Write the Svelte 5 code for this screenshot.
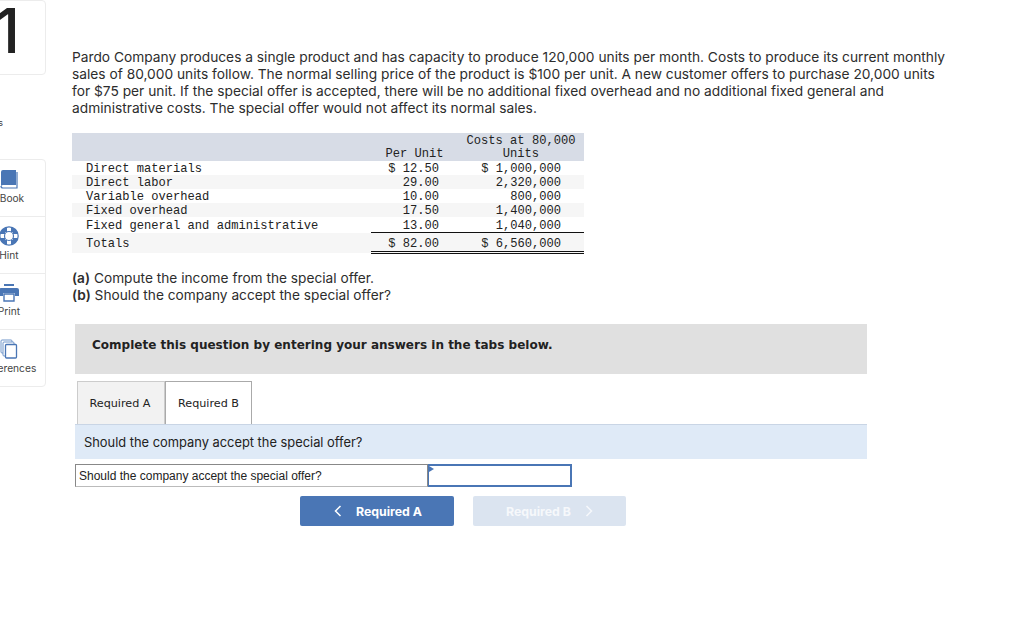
<script lang="ts">
	const rows = [
		{ label: 'Direct materials', unit: '$ 12.50', total: '$ 1,000,000' },
		{ label: 'Direct labor', unit: '29.00', total: '2,320,000' },
		{ label: 'Variable overhead', unit: '10.00', total: '800,000' },
		{ label: 'Fixed overhead', unit: '17.50', total: '1,400,000' },
		{ label: 'Fixed general and administrative', unit: '13.00', total: '1,040,000' },
	];
</script>

<div class="page">
	<aside class="side">
		<div class="card number">1</div>
		<div class="points">points</div>
		<div class="card tools">
			<div class="tool">
				<svg width="18" height="20" viewBox="0 0 18 20">
					<path d="M1 3 Q1 1 3 1 H16 V16 H3 Q1 16 1 18 Z" fill="#4a76b5" />
					<path d="M1 17 Q1 19 3 19 H17 V3" fill="none" stroke="#4a76b5" stroke-width="1.2" />
				</svg>
				<span>eBook</span>
			</div>
			<div class="tool">
				<svg width="20" height="20" viewBox="0 0 20 20">
					<circle cx="10" cy="10" r="6.8" fill="none" stroke="#4a76b5" stroke-width="5" />
					<path d="M8 0 H12 V20 H8 Z M0 8 H20 V12 H0 Z" fill="#fff" />
					<rect x="6" y="6" width="8" height="8" fill="#fff" />
					<circle cx="10" cy="10" r="9.2" fill="none" stroke="#4a76b5" stroke-width="1.2" />
					<circle cx="10" cy="10" r="4.5" fill="none" stroke="#4a76b5" stroke-width="1.2" />
				</svg>
				<span>Hint</span>
			</div>
			<div class="tool">
				<svg width="20" height="18" viewBox="0 0 20 18">
					<path d="M5 0 H15 V2 H5 Z" fill="#4a76b5" />
					<path d="M2 4 H18 Q20 4 20 6 V12 H16 V9 H4 V12 H0 V6 Q0 4 2 4 Z" fill="#4a76b5" />
					<path d="M5 10 H15 V17 H5 Z" fill="#fff" stroke="#4a76b5" stroke-width="1.4" />
				</svg>
				<span>Print</span>
			</div>
			<div class="tool">
				<svg width="18" height="20" viewBox="0 0 18 20">
					<rect x="1" y="1" width="11" height="13" rx="1" fill="#fff" stroke="#6f95c9" />
					<rect x="3" y="3" width="11" height="14" rx="1" fill="#fff" stroke="#6f95c9" />
					<rect x="5.5" y="5.5" width="11" height="13.5" rx="1" fill="#fff" stroke="#4a76b5" stroke-width="1.3" />
				</svg>
				<span>References</span>
			</div>
		</div>
	</aside>

	<main class="main">
		<p class="intro">
			Pardo Company produces a single product and has capacity to produce 120,000 units per month. Costs to produce its current monthly<br />
			sales of 80,000 units follow. The normal selling price of the product is $100 per unit. A new customer offers to purchase 20,000 units<br />
			for $75 per unit. If the special offer is accepted, there will be no additional fixed overhead and no additional fixed general and<br />
			administrative costs. The special offer would not affect its normal sales.
		</p>

		<table class="costs">
			<thead>
				<tr>
					<th class="label"></th>
					<th class="unit">Per Unit</th>
					<th class="total">Costs at 80,000 Units</th>
				</tr>
			</thead>
			<tbody>
				{#each rows as row}
					<tr>
						<td class="label">{row.label}</td>
						<td class="num unit">{row.unit}</td>
						<td class="num total">{row.total}</td>
					</tr>
				{/each}
				<tr class="totals">
					<td class="label">Totals</td>
					<td class="num unit">$ 82.00</td>
					<td class="num total">$ 6,560,000</td>
				</tr>
			</tbody>
		</table>

		<p class="asks">
			<b>(a)</b> Compute the income from the special offer.<br />
			<b>(b)</b> Should the company accept the special offer?
		</p>

		<div class="instruct">Complete this question by entering your answers in the tabs below.</div>

		<div class="tabs">
			<button class="tab">Required A</button>
			<button class="tab active">Required B</button>
		</div>
		<div class="prompt">Should the company accept the special offer?</div>

		<div class="answer">
			<div class="answer-label">Should the company accept the special offer?</div>
			<div class="answer-input"></div>
		</div>

		<div class="nav">
			<button class="nav-btn prev">
				<svg width="8" height="12" viewBox="0 0 8 12"><path d="M6.5 1 L1.5 6 L6.5 11" fill="none" stroke="currentColor" stroke-width="1.5" /></svg>
				Required A
			</button>
			<button class="nav-btn off">
				Required B
				<svg width="8" height="12" viewBox="0 0 8 12"><path d="M1.5 1 L6.5 6 L1.5 11" fill="none" stroke="currentColor" stroke-width="1.5" /></svg>
			</button>
		</div>
	</main>
</div>

<style>
	:global(body) {
		margin: 0;
		background: #fff;
		overflow: hidden;
	}

	.page {
		display: flex;
		height: 634px;
		overflow: hidden;
		font-family: "Inter", "Open Sans", sans-serif;
		color: #2d2d2d;
	}

	.side {
		flex: none;
		width: 74px;
		margin-left: -28px;
	}

	.card {
		border: 1px solid #ececec;
		border-radius: 4px;
		box-sizing: border-box;
		background: #fff;
	}

	.number {
		height: 75px;
		padding-right: 4px;
		font-size: 62px;
		font-weight: 500;
		line-height: 60px;
		text-align: center;
		color: #222;
	}

	.points {
		margin-top: 42px;
		height: 42px;
		padding-right: 43px;
		font-size: 9px;
		line-height: 12px;
		text-align: right;
		color: #444;
	}

	.tools {
		height: 228px;
		display: flex;
		flex-direction: column;
	}

	.tool {
		flex: 1;
		display: flex;
		flex-direction: column;
		align-items: center;
		justify-content: flex-end;
		gap: 2px;
		padding-bottom: 11px;
		font-size: 10.2px;
		line-height: 14px;
		color: #444;
		border-bottom: 1px solid #ececec;
	}

	.tool:last-child {
		border-bottom: none;
	}

	.main {
		flex: none;
		width: 800px;
		margin-left: 26px;
	}

	.intro {
		margin: 49px 0 0;
		width: 900px;
		font-size: 13.75px;
		line-height: 17px;
		white-space: nowrap;
	}

	.costs {
		margin-top: 16px;
		width: 512px;
		border-collapse: collapse;
		table-layout: fixed;
		font-family: "Liberation Mono", monospace;
		font-size: 12.1px;
		line-height: 13px;
		color: #222;
	}

	.costs th {
		height: 28px;
		padding: 0;
		background: #d7dce6;
		font-weight: normal;
		vertical-align: bottom;
		text-align: center;
	}

	.costs td {
		height: 12px;
		padding: 2px 0 0;
		line-height: 12px;
		white-space: nowrap;
	}

	.costs tbody tr:nth-child(even) {
		background: #f6f6f6;
	}

	.costs tbody tr:nth-child(5) td {
		height: 13px;
	}

	.costs th.label,
	.costs td.label {
		width: 299px;
	}

	.costs td.label {
		padding-left: 14px;
		box-sizing: border-box;
	}

	.costs th.unit {
		width: 87px;
	}

	.num {
		text-align: right;
	}

	.costs td.unit {
		padding-right: 19px;
	}

	.costs td.total {
		padding-right: 23px;
	}

	.totals {
		background: #f6f6f6;
	}

	.costs .totals td {
		height: 15px;
		padding-top: 3px;
	}

	.costs .totals td.unit,
	.costs .totals td.total {
		border-top: 1px solid #111;
		border-bottom: 3px double #111;
	}

	.asks {
		margin: 16px 0 0;
		font-size: 13.7px;
		line-height: 17px;
	}

	.asks b {
		font-weight: 600;
	}

	.instruct {
		box-sizing: border-box;
		margin: 20px 0 0 3px;
		width: 792px;
		height: 50px;
		padding: 0 17px;
		background: #e0e0e0;
		font-family: "DejaVu Sans", sans-serif;
		font-weight: bold;
		font-size: 12.03px;
		line-height: 42px;
		color: #222;
	}

	.tabs {
		display: flex;
		margin: 7px 0 0 5px;
		height: 43px;
	}

	.tab {
		box-sizing: border-box;
		height: 43px;
		width: 88px;
		padding: 0 2px 0 0;
		border: 1px solid #ccc;
		border-bottom: none;
		background: #f2f2f2;
		font-family: "DejaVu Sans", sans-serif;
		font-size: 11.2px;
		color: #222;
	}

	.tab.active {
		width: 87px;
		padding: 0;
		background: #fff;
		border-color: #aaa;
		position: relative;
		z-index: 1;
	}

	.prompt {
		box-sizing: border-box;
		margin-left: 3px;
		width: 792px;
		height: 35px;
		padding-left: 9px;
		background: #dfeaf7;
		border-top: 1px solid #c9d5e5;
		font-size: 12.87px;
		line-height: 35px;
		color: #222;
	}

	.answer {
		display: flex;
		box-sizing: border-box;
		margin: 5px 0 0 3px;
		width: 497px;
		height: 23px;
	}

	.answer-label {
		box-sizing: border-box;
		width: 353px;
		border: 1px solid #888;
		border-bottom-color: #bbb;
		padding: 1px 0 0 3px;
		font-family: "Liberation Sans", sans-serif;
		font-size: 12px;
		line-height: 20px;
		color: #222;
	}

	.answer-input {
		position: relative;
		flex: 1;
		border: 2px solid #4a76b5;
		border-left-width: 1px;
		box-sizing: border-box;
	}

	.answer-input::before {
		content: "";
		position: absolute;
		left: 0;
		top: 0;
		border-left: 5px solid #4a76b5;
		border-top: 3px solid transparent;
		border-bottom: 3px solid transparent;
	}

	.nav {
		display: flex;
		gap: 19px;
		margin: 9px 0 0 228px;
	}

	.nav-btn {
		display: flex;
		align-items: center;
		justify-content: center;
		gap: 14px;
		width: 154px;
		height: 30px;
		padding: 0;
		border: none;
		border-radius: 2px;
		background: #4a76b5;
		color: #fff;
		font-family: "Inter", sans-serif;
		font-weight: 700;
		font-size: 12.3px;
	}

	.nav-btn.prev {
		padding-left: 2px;
	}

	.nav-btn.off {
		width: 153px;
		background: #dbe4f0;
		color: #f6f8fb;
	}
</style>
